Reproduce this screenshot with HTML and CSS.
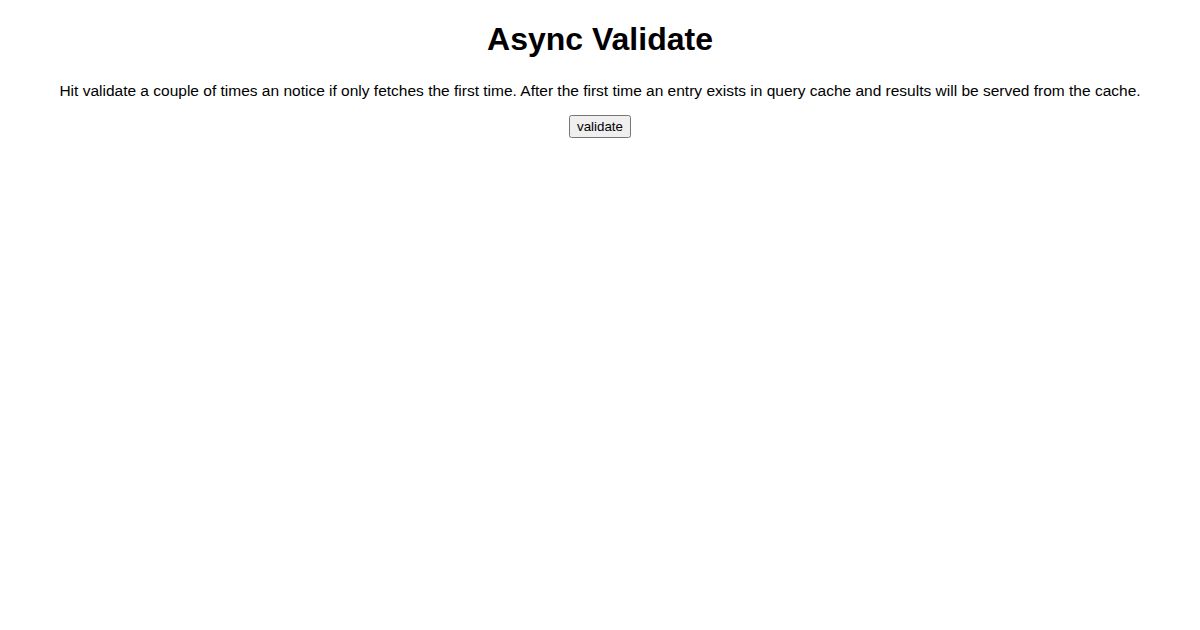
FILE: index.html
```html
<!DOCTYPE html>
<html lang="en">
<head>
  <meta charset="UTF-8" />
  <title>Async Validate</title>
  <link rel="stylesheet" href="styles.css">
</head>
<body>
  <div class="app">
    <h1>Async Validate</h1>
    <p>Hit validate a couple of times an notice if only fetches the first time. After the first time an entry exists in query cache and results will be served from the cache.</p>
    <button class="validate-btn">validate</button>
  </div>
</body>
</html>
```

FILE: styles.css
```css
body {
  margin: 0;
  font-family: "Liberation Sans", Arial, sans-serif;
  color: #000;
  background: #fff;
}

.app {
  text-align: center;
}

h1 {
  font-size: 2em;
  margin: 0.67em 0;
}

p {
  font-size: 15.5px;
  margin: 24px 0 15px;
}

.validate-btn {
  font-family: "Liberation Sans", Arial, sans-serif;
  font-size: 13.33px;
  padding: 2px 6px;
}
```
